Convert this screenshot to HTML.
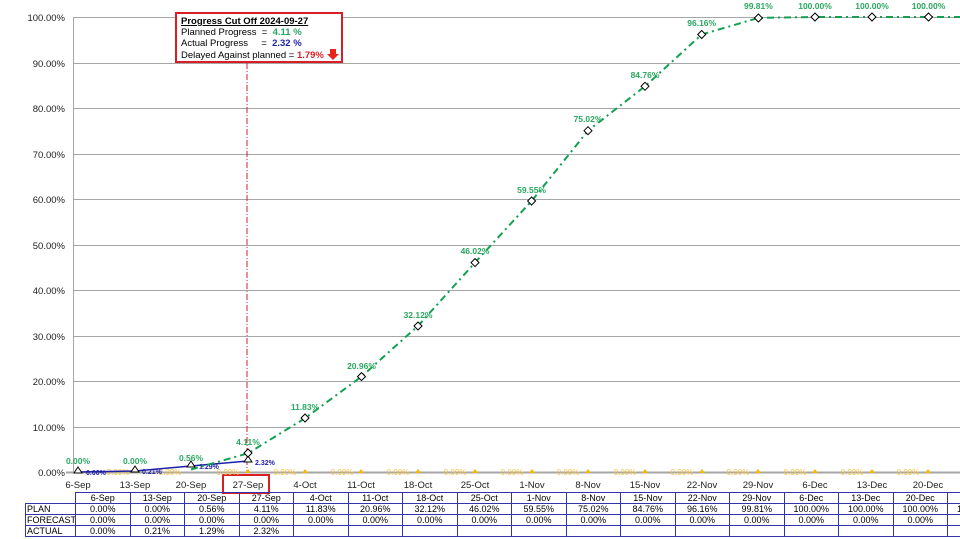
<!DOCTYPE html>
<html><head><style>
body{margin:0;width:960px;height:539px;overflow:hidden;background:#fff;font-family:"Liberation Sans",sans-serif;position:relative}
svg{position:absolute;left:0;top:0}
table{position:absolute;left:25px;top:492px;width:977px;border-collapse:collapse;table-layout:fixed;font-size:9px;color:#000}
td{border:1px solid #3333aa;height:10px;padding:0;text-align:center;line-height:10px;white-space:nowrap;overflow:hidden}
td.l{text-align:left;padding-left:1px}
.box{position:absolute;left:175px;top:12px;width:168px;height:51px;border:2px solid #d81f26;background:#fff;font-size:9.5px;line-height:11px;padding:2px 0 0 4px;box-sizing:border-box;white-space:nowrap}
</style></head><body>
<svg width="960" height="539" font-family="Liberation Sans, sans-serif">
<g stroke="#a6a6a6" stroke-width="1">
<line x1="73" y1="17.5" x2="960" y2="17.5"/><line x1="73" y1="63.5" x2="960" y2="63.5"/><line x1="73" y1="108.5" x2="960" y2="108.5"/><line x1="73" y1="154.5" x2="960" y2="154.5"/><line x1="73" y1="199.5" x2="960" y2="199.5"/><line x1="73" y1="245.5" x2="960" y2="245.5"/><line x1="73" y1="290.5" x2="960" y2="290.5"/><line x1="73" y1="336.5" x2="960" y2="336.5"/><line x1="73" y1="381.5" x2="960" y2="381.5"/><line x1="73" y1="427.5" x2="960" y2="427.5"/>
<line x1="73.5" y1="17" x2="73.5" y2="472"/>
</g>
<line x1="66" y1="472.5" x2="960" y2="472.5" stroke="#a6a6a6" stroke-width="2"/>
<g font-size="9.5" fill="#222" text-anchor="end">
<text x="65" y="21">100.00%</text><text x="65" y="67">90.00%</text><text x="65" y="112">80.00%</text><text x="65" y="158">70.00%</text><text x="65" y="203">60.00%</text><text x="65" y="249">50.00%</text><text x="65" y="294">40.00%</text><text x="65" y="340">30.00%</text><text x="65" y="385">20.00%</text><text x="65" y="431">10.00%</text><text x="65" y="476">0.00%</text>
</g>
<g font-size="9.5" fill="#222" text-anchor="middle">
<text x="78" y="488">6-Sep</text><text x="135" y="488">13-Sep</text><text x="191" y="488">20-Sep</text><text x="248" y="488">27-Sep</text><text x="305" y="488">4-Oct</text><text x="361" y="488">11-Oct</text><text x="418" y="488">18-Oct</text><text x="475" y="488">25-Oct</text><text x="532" y="488">1-Nov</text><text x="588" y="488">8-Nov</text><text x="645" y="488">15-Nov</text><text x="702" y="488">22-Nov</text><text x="758" y="488">29-Nov</text><text x="815" y="488">6-Dec</text><text x="872" y="488">13-Dec</text><text x="928" y="488">20-Dec</text>
</g>
<rect x="223" y="475" width="46" height="18" fill="none" stroke="#d81f26" stroke-width="2"/>
<line x1="247" y1="63" x2="247" y2="472" stroke="#d81f26" stroke-dasharray="6,2,1,2"/>
<g font-size="8" fill="#f5c244" text-anchor="middle">
<text x="285" y="475">0.00%</text><text x="342" y="475">0.00%</text><text x="398" y="475">0.00%</text><text x="455" y="475">0.00%</text><text x="512" y="475">0.00%</text><text x="568" y="475">0.00%</text><text x="625" y="475">0.00%</text><text x="682" y="475">0.00%</text><text x="738" y="475">0.00%</text><text x="795" y="475">0.00%</text><text x="852" y="475">0.00%</text><text x="908" y="475">0.00%</text><text x="118" y="475">0.00%</text><text x="170" y="475">0.00%</text><text x="228" y="475">0.00%</text>
</g>
<g fill="#f5b800">
<path d="M305 469l3 4h-6z"/><path d="M361 469l3 4h-6z"/><path d="M418 469l3 4h-6z"/><path d="M475 469l3 4h-6z"/><path d="M532 469l3 4h-6z"/><path d="M588 469l3 4h-6z"/><path d="M645 469l3 4h-6z"/><path d="M702 469l3 4h-6z"/><path d="M758 469l3 4h-6z"/><path d="M815 469l3 4h-6z"/><path d="M872 469l3 4h-6z"/><path d="M928 469l3 4h-6z"/><path d="M248 469l3 4h-6z"/>
</g>
<polyline points="78,472 135,471 191,466 248,461" fill="none" stroke="#1f1fa8" stroke-width="1.5"/>
<g fill="#fff" stroke="#000" stroke-width="1">
<path d="M78 467l4 6h-8z"/><path d="M135 466l4 6h-8z"/><path d="M191 461l4 6h-8z"/><path d="M248 456l4 6h-8z"/>
</g>
<g font-size="7" fill="#1f1fa8" font-weight="bold">
<text x="86" y="475">0.00%</text><text x="142" y="474">0.21%</text><text x="199" y="469">1.29%</text><text x="255" y="465">2.32%</text>
</g>
<polyline points="191,469.5 248,453.3 305,418.2 361.5,376.6 418,325.9 475,262.6 531.6,201 588,130.7 645,86.3 701.7,34.5 758.4,17.9 815,17 872,17 928.5,17 960,17" fill="none" stroke="#12a050" stroke-width="2" stroke-dasharray="7,4,2,4"/>
<g fill="#fff" stroke="#000" stroke-width="1">
<path d="M248 449l4 4-4 4-4-4z"/><path d="M305 414l4 4-4 4-4-4z"/><path d="M361.5 372.6l4 4-4 4-4-4z"/><path d="M418 322l4 4-4 4-4-4z"/><path d="M475 258.6l4 4-4 4-4-4z"/><path d="M531.6 197l4 4-4 4-4-4z"/><path d="M588 126.7l4 4-4 4-4-4z"/><path d="M645 82.3l4 4-4 4-4-4z"/><path d="M701.7 30.5l4 4-4 4-4-4z"/><path d="M758.4 14l4 4-4 4-4-4z"/><path d="M815 13l4 4-4 4-4-4z"/><path d="M872 13l4 4-4 4-4-4z"/><path d="M928.5 13l4 4-4 4-4-4z"/>
</g>
<g font-size="8.5" fill="#2aa860" font-weight="bold" text-anchor="middle">
<text x="78" y="464">0.00%</text><text x="135" y="464">0.00%</text><text x="191" y="461">0.56%</text><text x="248" y="445">4.11%</text><text x="305" y="410">11.83%</text><text x="361.5" y="369">20.96%</text><text x="418" y="318">32.12%</text><text x="475" y="254">46.02%</text><text x="531.6" y="193">59.55%</text><text x="588" y="122">75.02%</text><text x="645" y="78">84.76%</text><text x="701.7" y="26">96.16%</text><text x="758.4" y="9">99.81%</text><text x="815" y="9">100.00%</text><text x="872" y="9">100.00%</text><text x="928.5" y="9">100.00%</text>
</g>
</svg>
<div class="box"><b><u>Progress Cut Off 2024-09-27</u></b><br>Planned Progress &nbsp;= &nbsp;<b style="color:#2aa860">4.11 %</b><br>Actual Progress &nbsp;&nbsp;&nbsp;&nbsp;= &nbsp;<b style="color:#1f1fa8">2.32 %</b><br>Delayed Against planned = <b style="color:#d81f26">1.79%</b> <svg style="position:static;vertical-align:-2px" width="12" height="11"><path d="M3 0h6v5h3l-6 6-6-6h3z" fill="#e8231a"/></svg></div>
<table>
<colgroup><col style="width:50px"><col span="17" style="width:54.5px"></colgroup>
<tr><td style="border:none;border-right:1px solid #3333aa"></td><td>6-Sep</td><td>13-Sep</td><td>20-Sep</td><td>27-Sep</td><td>4-Oct</td><td>11-Oct</td><td>18-Oct</td><td>25-Oct</td><td>1-Nov</td><td>8-Nov</td><td>15-Nov</td><td>22-Nov</td><td>29-Nov</td><td>6-Dec</td><td>13-Dec</td><td>20-Dec</td><td>27-Dec</td></tr>
<tr><td class="l">PLAN</td><td>0.00%</td><td>0.00%</td><td>0.56%</td><td>4.11%</td><td>11.83%</td><td>20.96%</td><td>32.12%</td><td>46.02%</td><td>59.55%</td><td>75.02%</td><td>84.76%</td><td>96.16%</td><td>99.81%</td><td>100.00%</td><td>100.00%</td><td>100.00%</td><td>100.00%</td></tr>
<tr><td class="l">FORECAST</td><td>0.00%</td><td>0.00%</td><td>0.00%</td><td>0.00%</td><td>0.00%</td><td>0.00%</td><td>0.00%</td><td>0.00%</td><td>0.00%</td><td>0.00%</td><td>0.00%</td><td>0.00%</td><td>0.00%</td><td>0.00%</td><td>0.00%</td><td>0.00%</td><td>0.00%</td></tr>
<tr><td class="l">ACTUAL</td><td>0.00%</td><td>0.21%</td><td>1.29%</td><td>2.32%</td><td></td><td></td><td></td><td></td><td></td><td></td><td></td><td></td><td></td><td></td><td></td><td></td><td></td></tr>
</table>
</body></html>
